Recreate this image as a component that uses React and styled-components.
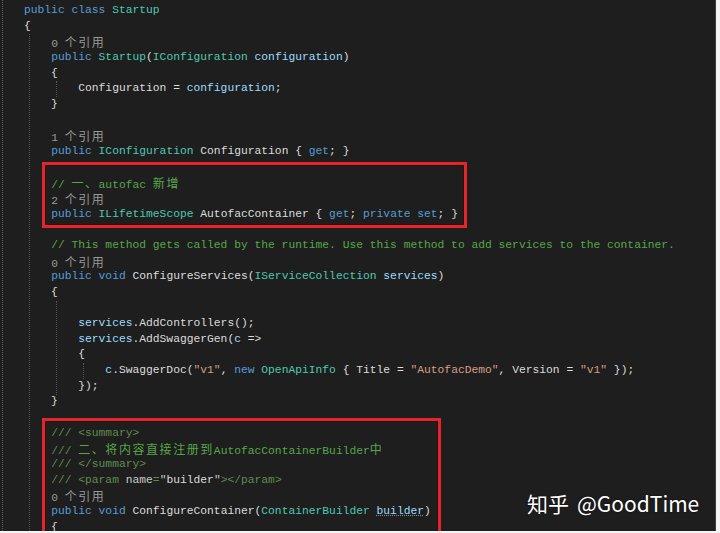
import styled, { createGlobalStyle } from 'styled-components';

const FONT_PX = 11.3;
const CHAR_W = FONT_PX * 0.6;
const LINE_H = 15.67;

const colors = {
  plain: '#dcdcdc',
  kw: '#569cd6',
  type: '#4ec9b0',
  param: '#9cdcfe',
  comment: '#57a64a',
  str: '#d69d85',
  lens: '#999999',
  doc: '#608b4e',
  attr: '#c8c8c8',
  hint: '#9cdcfe',
};

const GlobalStyle = createGlobalStyle`
  html, body {
    margin: 0;
    padding: 0;
    background: #f3f3f3;
  }
`;

const Frame = styled.div`
  width: 720px;
  height: 533px;
  box-sizing: border-box;
  padding: 0 4px 2px 0;
  background: #f3f3f3;
  overflow: hidden;
`;

const Editor = styled.div`
  position: relative;
  display: flex;
  height: 100%;
  background: #1e1e1e;
  border-right: 1px solid #3c3c3c;
  overflow: hidden;
`;

// outlining margin, the dotted line at the far left
const Margin = styled.div`
  flex: 0 0 24px;
  background: linear-gradient(to bottom, #5e5e5e 50%, transparent 0) 2px 0 / 1px 2px repeat-y;
`;

const CodeArea = styled.div`
  position: relative;
  flex: 1;
  padding-top: 3px;
  font-family: 'Liberation Mono', 'DejaVu Sans Mono', monospace;
  font-size: ${FONT_PX}px;
  color: ${colors.plain};
`;

const Line = styled.div`
  height: ${LINE_H}px;
  line-height: ${LINE_H}px;
  white-space: pre;
`;

const Tok = styled.span`
  color: ${(p) => colors[p.$kind] || colors.plain};
  ${(p) => p.$kind === 'hint' && 'text-decoration: underline dotted #8a8a8a;'}
`;

// CJK glyphs take two monospace cells, as in the editor font
const Cjk = styled.span`
  font-family: 'Noto Sans CJK SC', sans-serif;
  font-size: 12px;
  letter-spacing: ${2 * CHAR_W - 12}px;
`;

const Guide = styled.span.attrs((p) => ({
  style: {
    left: `${p.$col * CHAR_W + 5}px`,
    top: `${p.$from * LINE_H + 3}px`,
    height: `${(p.$to - p.$from) * LINE_H}px`,
  },
}))`
  position: absolute;
  width: 0;
  border-left: 1px dotted #555;
`;

const RedBox = styled.div`
  position: absolute;
  left: ${(p) => p.$x}px;
  top: ${(p) => p.$y}px;
  width: ${(p) => p.$w}px;
  height: ${(p) => p.$h}px;
  box-sizing: border-box;
  border: 3px solid #e3262b;
  box-shadow: inset 0 0 0 1px rgba(60, 0, 0, 0.6);
`;

const Watermark = styled.div`
  position: absolute;
  left: 527px;
  top: 488px;
  display: flex;
  gap: 8px;
  font-family: 'Noto Sans CJK SC', 'Noto Sans', sans-serif;
  font-size: 21px;
  line-height: 30px;
  color: #ffffff;
  text-shadow: 0 0 2px rgba(0, 0, 0, 0.7);
`;

const code = [
  '[[kw:public]] [[kw:class]] [[type:Startup]]',
  '{',
  '    [[lens:0 个引用]]',
  '    [[kw:public]] [[type:Startup]]([[type:IConfiguration]] [[param:configuration]])',
  '    {',
  '        Configuration = [[param:configuration]];',
  '    }',
  '',
  '    [[lens:1 个引用]]',
  '    [[kw:public]] [[type:IConfiguration]] Configuration { [[kw:get]]; }',
  '',
  '    [[comment:// 一、autofac 新增]]',
  '    [[lens:2 个引用]]',
  '    [[kw:public]] [[type:ILifetimeScope]] AutofacContainer { [[kw:get]]; [[kw:private]] [[kw:set]]; }',
  '',
  '    [[comment:// This method gets called by the runtime. Use this method to add services to the container.]]',
  '    [[lens:0 个引用]]',
  '    [[kw:public]] [[kw:void]] ConfigureServices([[type:IServiceCollection]] [[param:services]])',
  '    {',
  '',
  '        [[param:services]].AddControllers();',
  '        [[param:services]].AddSwaggerGen([[param:c]] =>',
  '        {',
  '            [[param:c]].SwaggerDoc([[str:"v1"]], [[kw:new]] [[type:OpenApiInfo]] { Title = [[str:"AutofacDemo"]], Version = [[str:"v1"]] });',
  '        });',
  '    }',
  '',
  '    [[doc:///]] [[doc:<summary>]]',
  '    [[doc:///]] [[comment:二、将内容直接注册到AutofacContainerBuilder中]]',
  '    [[doc:///]] [[doc:</summary>]]',
  '    [[doc:///]] [[doc:<param]] [[attr:name]][[doc:=]][[attr:"]][[plain:builder]][[attr:"]][[doc:></param>]]',
  '    [[lens:0 个引用]]',
  '    [[kw:public]] [[kw:void]] ConfigureContainer([[type:ContainerBuilder]] [[hint:builder]])',
  '    {',
];

// indent guides: column, first line, line after last
const guides = [
  [0, 2, 36],
  [4, 5, 6],
  [4, 19, 25],
  [8, 23, 24],
  [4, 34, 36],
];

const CJK_RE = /([\u3000-\u303f\u4e00-\u9fff\uff00-\uffef]+)/;

const withCjk = (text) =>
  text.split(CJK_RE).map((part, i) => (i % 2 ? <Cjk key={i}>{part}</Cjk> : part));

const renderLine = (src) => {
  const out = [];
  const re = /\[\[(\w+):(.*?)\]\]/g;
  let last = 0;
  let m;
  while ((m = re.exec(src))) {
    if (m.index > last) out.push(<Tok key={last}>{withCjk(src.slice(last, m.index))}</Tok>);
    out.push(
      <Tok key={m.index} $kind={m[1]}>
        {withCjk(m[2])}
      </Tok>
    );
    last = re.lastIndex;
  }
  if (last < src.length) out.push(<Tok key={last}>{withCjk(src.slice(last))}</Tok>);
  return out.length ? out : ' ';
};

const App = () => {
  return (
    <Frame>
      <GlobalStyle />
      <Editor>
        <Margin />
        <CodeArea>
          {guides.map(([col, from, to], i) => (
            <Guide key={i} $col={col} $from={from} $to={to} />
          ))}
          {code.map((src, i) => (
            <Line key={i}>{renderLine(src)}</Line>
          ))}
        </CodeArea>

        <RedBox $x={42} $y={162} $w={425} $h={66} />
        <RedBox $x={42} $y={418} $w={399} $h={140} />

        <Watermark>
          <span>知乎</span>
          <span>@GoodTime</span>
        </Watermark>
      </Editor>
    </Frame>
  );
};

export default App;
